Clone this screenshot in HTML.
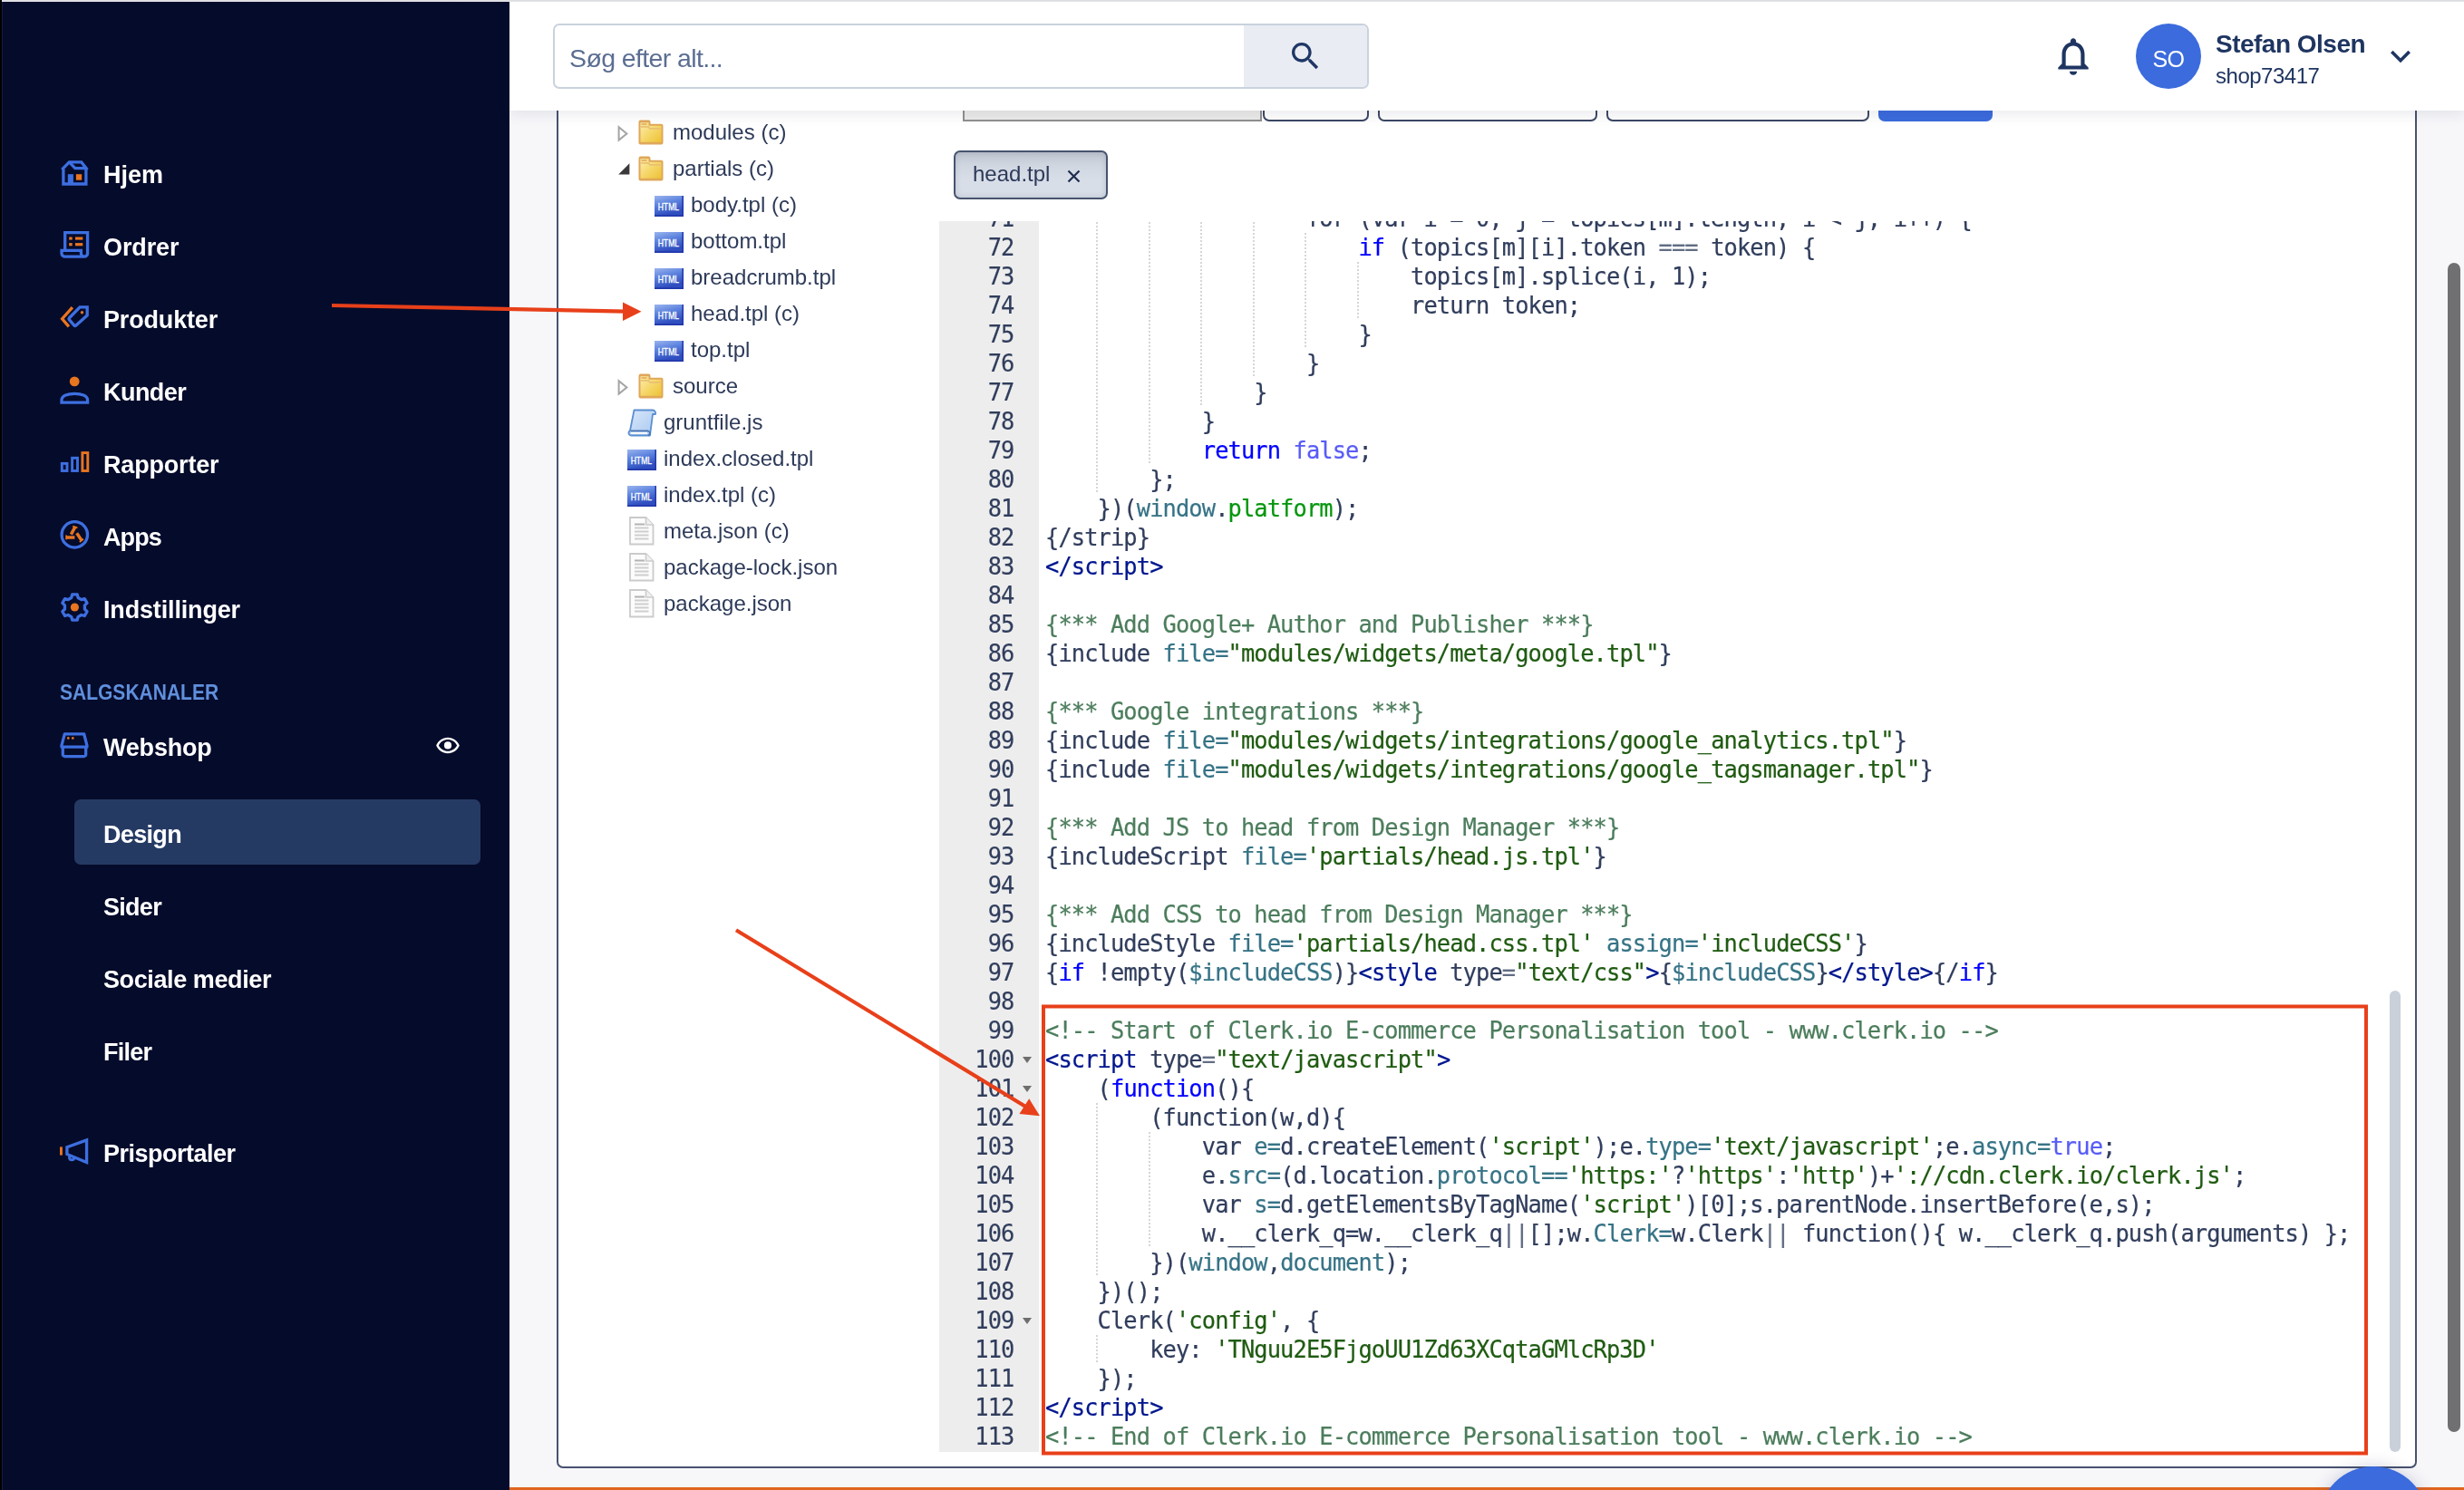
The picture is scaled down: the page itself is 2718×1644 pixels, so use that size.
<!DOCTYPE html>
<html lang="da">
<head>
<meta charset="utf-8">
<title>Design - head.tpl</title>
<style>
*{box-sizing:border-box;margin:0;padding:0}
html,body{width:2718px;height:1644px;overflow:hidden;background:#f7f7fa}
body{position:relative;font-family:"Liberation Sans",sans-serif;color:#2d3a59}
.abs{position:absolute}
/* ---------- sidebar ---------- */
#side{position:absolute;left:0;top:0;width:562px;height:1644px;background:#050b2b;z-index:30}
#side:before{content:"";position:absolute;left:0;top:0;width:3px;height:100%;background:linear-gradient(to right,#000 0,#000 1.7px,#161d3c 1.7px,#161d3c 3px)}
.nav{position:absolute;left:114px;color:#fff;font-weight:700;font-size:27px;line-height:32px;white-space:nowrap}
.ico{position:absolute;left:66px;width:32px;height:32px;overflow:visible}
#sect{position:absolute;left:66px;top:748.6px;color:#5f8fdc;font-weight:700;font-size:23.7px;line-height:30px;transform:scaleX(.887);transform-origin:0 50%;white-space:nowrap}
#sel{position:absolute;left:82px;top:882px;width:448px;height:72px;border-radius:7px;background:#253a63}
/* ---------- header ---------- */
#topline{position:absolute;left:2px;top:0;width:2716px;height:2px;background:linear-gradient(#d9dade,#e6e7ea);z-index:60}
#hdr{position:absolute;left:562px;top:0;width:2156px;height:122px;background:#fff;z-index:40;box-shadow:0 4px 14px rgba(40,50,80,.10)}
#search{position:absolute;left:48px;top:26px;width:900px;height:72px;border:2px solid #c9d2dd;border-radius:7px;background:#fff;overflow:hidden}
#search .ph{position:absolute;left:16px;top:18px;font-size:28.5px;line-height:36px;color:#5b6e92;white-space:nowrap;letter-spacing:-.62px}
#search .btn{position:absolute;right:0;top:0;width:136px;height:68px;background:#e9ecf2}
#uname{position:absolute;left:1882px;top:30.5px;font-weight:700;font-size:28px;line-height:36px;color:#1f3561;white-space:nowrap;letter-spacing:-.51px}
#ushop{position:absolute;left:1882px;top:67px;font-size:24px;line-height:34px;color:#1f3561;white-space:nowrap;letter-spacing:-.48px}
#avatar{position:absolute;left:1794px;top:26px;width:72px;height:72px;border-radius:50%;background:#3b6bdd;color:#fff;font-size:25px;line-height:72px;text-align:center;padding-top:3px;letter-spacing:-.5px}
/* ---------- panel ---------- */
#panel{position:absolute;left:614px;top:60px;width:2052px;height:1560px;background:#fff;border:2px solid #465270;border-radius:0 0 7px 7px;z-index:10}
.tb{position:absolute;top:100px;height:34px;z-index:12}
/* tree */
.tr{position:absolute;font-size:24px;line-height:32px;white-space:nowrap;color:#2d3a59;z-index:15;will-change:transform}
.ti{position:absolute;z-index:15}
/* tab */
#tab{position:absolute;left:1052px;top:166px;width:170px;height:54px;border:2px solid #47546f;border-radius:7px;background:linear-gradient(#bfc5d0 0,#d0d6e0 28%,#d8dee8 60%);z-index:15;box-shadow:inset 0 0 6px rgba(60,72,100,.2)}
#tab span{position:absolute;left:19px;top:8px;font-size:24px;line-height:32px;color:#2d3a59}
/* editor */
#ed{position:absolute;left:1036px;top:244px;width:1628px;height:1358px;overflow:hidden;z-index:14;background:#fff}
#gut{position:absolute;left:0;top:0;width:110px;height:1358px;background:#ededed}
.ln,.cl{position:absolute;height:32px;line-height:32px;font-family:"DejaVu Sans Mono","Liberation Mono",monospace;font-size:25.4px;letter-spacing:-.892px;white-space:pre;transform:scaleY(1.08);transform-origin:0 24.8px}
.ln{left:0;width:82.5px;text-align:right;color:#303d5c;-webkit-text-stroke:.18px currentColor}
.cl{left:117px;color:#303d5c;-webkit-text-stroke:.22px currentColor}
.fw{position:absolute;left:92px;width:0;height:0;border-left:5.5px solid transparent;border-right:5.5px solid transparent;border-top:7px solid #6e6e6e}
.ig{position:absolute;width:2px;height:32px;background:repeating-linear-gradient(to bottom,#d6d6d6 0,#d6d6d6 2px,transparent 2px,transparent 4px)}
.k{color:#0000ff}.s{color:#1f5b11}.c{color:#4c7d5c}.v{color:#367386}.o{color:#616d83}.g{color:#00168e}.n{color:#585cf6}.p{color:#06960e}
#side,#hdr,#ed,#tab{will-change:transform}
</style>
</head>
<body>
<div id="side">
<svg class="ico" style="top:174px" viewBox="0 0 32 32" fill="none" stroke-width="3.3" ><path d="M3.9 12.5V29H28.9V12.5" stroke="#3d6fe0"/><path d="M2.3 13.2L10.4 4.9H23.8L30.4 13.2" stroke="#3d6fe0"/><path d="M10.6 5.2L16.9 11.7H30" stroke="#3d6fe0"/><rect x="8.8" y="18.2" width="6.1" height="10" fill="#3d6fe0"/><rect x="17.9" y="18.2" width="6.3" height="6.5" fill="#e8751f"/></svg>
<div class="nav" id="n_hjem" style="top:177px;letter-spacing:0px">Hjem</div>
<svg class="ico" style="top:254px" viewBox="0 0 32 32" fill="none" stroke-width="3.3" ><path d="M5.7 22V2.7H30.6V25.4a3.7 3.7 0 0 1-3.7 3.7H5.7a3.7 3.7 0 0 1-3.7-3.7V22.3H23.4V25.6a3.4 3.4 0 0 0 3.4 3.4" stroke="#3d6fe0"/><rect x="10.2" y="7.5" width="3.5" height="3.1" fill="#e8751f"/><rect x="17" y="7.5" width="8.3" height="3.1" fill="#e8751f"/><rect x="10.2" y="14.1" width="3.5" height="3.2" fill="#e8751f"/><rect x="17" y="14.1" width="8.3" height="3.2" fill="#e8751f"/></svg>
<div class="nav" id="n_ordrer" style="top:257px;letter-spacing:-0.12px">Ordrer</div>
<svg class="ico" style="top:334px" viewBox="0 0 32 32" fill="none" stroke-width="3.3" ><path d="M13.9 5.2L2.6 17.7L9.9 26.4" stroke="#e8751f"/><path d="M22.1 4.9H30.2V13.9L17.6 25.3a1.2 1.2 0 0 1-1.7-.1L10.3 18.6a1.2 1.2 0 0 1 0-1.6Z" stroke="#3d6fe0" stroke-linejoin="miter"/><circle cx="24.5" cy="10.8" r="1.7" fill="#e8751f"/></svg>
<div class="nav" id="n_produkter" style="top:337px;letter-spacing:-0.17px">Produkter</div>
<svg class="ico" style="top:414px" viewBox="0 0 32 32" fill="none" stroke-width="3.3" ><circle cx="16.2" cy="6.9" r="5.4" fill="#e8751f"/><path d="M2 30.1V27.4C2 22.6 9 20.3 16.3 20.3S30.6 22.6 30.6 27.4V30.1Z" stroke="#3d6fe0"/></svg>
<div class="nav" id="n_kunder" style="top:417px;letter-spacing:-0.54px">Kunder</div>
<svg class="ico" style="top:494px" viewBox="0 0 32 32" fill="none" stroke-width="3.3" ><rect x="2.3" y="17.4" width="5.7" height="8.1" stroke="#3d6fe0" stroke-width="2.9"/><rect x="13.6" y="11.3" width="5.9" height="14.2" stroke="#3d6fe0" stroke-width="2.9"/><rect x="24.9" y="5.6" width="5.9" height="19.9" stroke="#e8751f" stroke-width="2.9"/></svg>
<div class="nav" id="n_rapporter" style="top:497px;letter-spacing:-0.18px">Rapporter</div>
<svg class="ico" style="top:574px" viewBox="0 0 32 32" fill="none" stroke-width="3.3" ><circle cx="16.3" cy="15.9" r="14.2" stroke="#3d6fe0"/><path d="M16.9 7.4L12.4 15.6M7.4 18.9H16.4M18.7 14.3L24.2 22.4" stroke="#e8751f" stroke-width="3.5"/><path d="M14.2 6.6L19.4 8.4M7.2 16.6V21.2M21.8 24L26 20.8" stroke="#e8751f" stroke-width="1.8"/></svg>
<div class="nav" id="n_apps" style="top:577px;letter-spacing:-0.88px">Apps</div>
<svg class="ico" style="top:654px" viewBox="0 0 32 32" fill="none" stroke-width="3.3" ><path d="M20.10 5.46 L19.20 1.91 L13.70 1.91 L12.80 5.46 L9.10 7.60 L5.58 6.60 L2.83 11.36 L5.46 13.91 L5.46 18.19 L2.83 20.74 L5.58 25.50 L9.10 24.50 L12.80 26.64 L13.70 30.19 L19.20 30.19 L20.10 26.64 L23.80 24.50 L27.32 25.50 L30.07 20.74 L27.44 18.19 L27.44 13.91 L30.07 11.36 L27.32 6.60 L23.80 7.60 Z" stroke="#3d6fe0" stroke-linejoin="round"/><circle cx="16.4" cy="16" r="4.6" fill="#e8751f"/></svg>
<div class="nav" id="n_indst" style="top:657px;letter-spacing:-0.16px">Indstillinger</div>
<div id="sect">SALGSKANALER</div>
<svg class="ico" style="top:806px" viewBox="0 0 32 32" fill="none" stroke-width="3.3" ><path d="M5.3 3.9H26.7L29.9 16.4V18.2H2V16.4Z" stroke="#3d6fe0" stroke-linejoin="round"/><path d="M3.3 18V26.4a2.2 2.2 0 0 0 2.2 2.2H26.5a2.2 2.2 0 0 0 2.2-2.2V18" stroke="#3d6fe0"/><circle cx="9.3" cy="8.4" r="1.35" fill="#e8751f"/><circle cx="14.3" cy="8.4" r="1.35" fill="#e8751f"/></svg>
<div class="nav" id="n_webshop" style="top:809px;letter-spacing:-.2px">Webshop</div>
<svg class="abs" style="left:480px;top:808.6px;width:28px;height:28px" viewBox="0 0 24 24"><path fill="#fff" fill-rule="evenodd" d="M12 4C7 4 2.730 7.110 1 11.500 2.730 15.890 7 19 12 19s9.270-3.110 11-7.500C21.270 7.110 17 4 12 4zM12 6.100c3.700 0 7 2.080 8.620 5.400C19 14.820 15.700 16.900 12 16.900s-7-2.080-8.620-5.400C5 8.180 8.300 6.100 12 6.100z"/><circle cx="12" cy="11.5" r="3.5" fill="#fff"/></svg>
<div id="sel"></div>
<div class="nav" id="n_design" style="top:905px;letter-spacing:-0.67px">Design</div>
<div class="nav" id="n_sider" style="top:985px;letter-spacing:-0.71px">Sider</div>
<div class="nav" id="n_sociale" style="top:1065px;letter-spacing:-0.4px">Sociale medier</div>
<div class="nav" id="n_filer" style="top:1145px;letter-spacing:-0.76px">Filer</div>
<svg class="ico" style="top:1254px" viewBox="0 0 32 32" fill="none" stroke-width="3.3" ><rect x="0" y="11.4" width="2.9" height="9.2" fill="#e8751f"/><path d="M7.9 11.7L29.6 3.9V28.6L7.9 19.4Z" stroke="#3d6fe0" stroke-linejoin="miter"/><path d="M10.6 21.6V23.2a2.6 2.6 0 0 0 5.2 0" stroke="#3d6fe0" stroke-width="3"/></svg>
<div class="nav" id="n_pris" style="top:1257px;letter-spacing:-.5px">Prisportaler</div>
</div>
<div id="topline"></div>
<div id="hdr">
  <div id="search">
    <div class="ph">Søg efter alt...</div>
    <div class="btn">
      <svg class="abs" style="left:47.8px;top:14px;width:40px;height:40px" viewBox="0 0 24 24"><path fill="#1f3766" d="M15.5 14h-.79l-.28-.27C15.41 12.59 16 11.11 16 9.5 16 5.91 13.09 3 9.5 3S3 5.91 3 9.5 5.91 16 9.5 16c1.61 0 3.09-.59 4.23-1.57l.27.28v.79l5 4.99L20.49 19l-4.99-5zm-6 0C7.01 14 5 11.99 5 9.5S7.01 5 9.5 5 14 7.01 14 9.5 11.99 14 9.5 14z"/></svg>
    </div>
  </div>
  <svg class="abs" style="left:1700px;top:37px;width:50px;height:50px" viewBox="0 0 24 24"><path fill="#1f3561" d="M12 22c1.1 0 2-.9 2-2h-4c0 1.1.9 2 2 2zm6-6v-5c0-3.07-1.63-5.64-4.500-6.320V4c0-.83-.67-1.500-1.500-1.500s-1.500.67-1.500 1.500v.68C7.640 5.360 6 7.920 6 11v5l-2 2v1h16v-1l-2-2zm-2 1H8v-6c0-2.480 1.510-4.500 4-4.500s4 2.020 4 4.500v6z"/></svg>
  <div id="avatar">SO</div>
  <div id="uname">Stefan Olsen</div>
  <div id="ushop">shop73417</div>
  <svg class="abs" style="left:2064px;top:40px;width:44px;height:44px" viewBox="0 0 24 24"><path fill="#1f3561" d="M16.59 8.59L12 13.170 7.410 8.590 6 10l6 6 6-6z"/></svg>
</div>
<div id="panel"></div>
<svg class="abs" style="left:0;top:0;width:0;height:0" aria-hidden="true"><defs><linearGradient id="fg" x1="0" y1="0" x2="1" y2="1"><stop offset="0" stop-color="#fcedb0"/><stop offset=".55" stop-color="#f5d564"/><stop offset="1" stop-color="#ecc235"/></linearGradient><linearGradient id="hg" x1="0" y1="0" x2="0.35" y2="1"><stop offset="0" stop-color="#9bb5ee"/><stop offset=".5" stop-color="#587fdd"/><stop offset="1" stop-color="#2f4ebf"/></linearGradient><linearGradient id="sg" x1="0" y1="0" x2="1" y2="1"><stop offset="0" stop-color="#d9e8fb"/><stop offset="1" stop-color="#a9c8f0"/></linearGradient></defs></svg>
<div class="tb" style="left:1062px;width:330px;background:#ecebea;border:2px solid #909090;border-top:0"></div>
<div class="tb" style="left:1393px;width:117px;background:#fff;border:2px solid #3c4864;border-radius:0 0 7px 7px"></div>
<div class="tb" style="left:1520px;width:242px;background:#fff;border:2px solid #3c4864;border-radius:0 0 7px 7px"></div>
<div class="tb" style="left:1772px;width:290px;background:#fff;border:2px solid #3c4864;border-radius:0 0 7px 7px"></div>
<div class="tb" style="left:2072px;width:126px;background:#3b6bdd;border-radius:0 0 7px 7px"></div>
<svg class="ti" style="left:703px;top:129.5px;width:30px;height:31px" viewBox="0 0 30 30" preserveAspectRatio="none"><path d="M1.5 4.5a2 2 0 0 1 2-2h9a2 2 0 0 1 2 2v2h12a2 2 0 0 1 2 2v18a2 2 0 0 1-2 2h-23a2 2 0 0 1-2-2z" fill="#e0a75a"/><path d="M3.5 5h9v3.5h14v17.5h-23z" fill="url(#fg)"/><path d="M4 9.5h8l2 2h12.5" stroke="#e9c071" stroke-width="1.6" fill="none"/><path d="M4.5 6.8h6" stroke="#e6b45e" stroke-width="1.8" fill="none"/></svg>
<svg class="ti" style="left:681px;top:138px;width:14px;height:20px" viewBox="0 0 14 20" fill="none"><path d="M1.6 2.2L10.4 9.4L1.6 16.6Z" stroke="#a4a4a4" stroke-width="2" stroke-linejoin="miter"/></svg>
<div class="tr" style="left:742px;top:129.8px">modules (c)</div>
<svg class="ti" style="left:703px;top:169.5px;width:30px;height:31px" viewBox="0 0 30 30" preserveAspectRatio="none"><path d="M1.5 4.5a2 2 0 0 1 2-2h9a2 2 0 0 1 2 2v2h12a2 2 0 0 1 2 2v18a2 2 0 0 1-2 2h-23a2 2 0 0 1-2-2z" fill="#e0a75a"/><path d="M3.5 5h9v3.5h14v17.5h-23z" fill="url(#fg)"/><path d="M4 9.5h8l2 2h12.5" stroke="#e9c071" stroke-width="1.6" fill="none"/><path d="M4.5 6.8h6" stroke="#e6b45e" stroke-width="1.8" fill="none"/></svg>
<svg class="ti" style="left:682px;top:180px;width:14px;height:14px" viewBox="0 0 14 14"><path d="M12.4 0.2V12.4H0.2Z" fill="#3a3a3a"/></svg>
<div class="tr" style="left:742px;top:169.8px">partials (c)</div>
<svg class="ti" style="left:722px;top:216px;width:32px;height:23px" viewBox="0 0 32 23"><rect width="32" height="23" fill="#2136ab"/><rect x="0" y="0" width="30.5" height="21.3" fill="url(#hg)"/><text x="15.4" y="15.8" text-anchor="middle" font-family="Liberation Sans, sans-serif" font-weight="400" font-size="11.2" textLength="23.5" lengthAdjust="spacingAndGlyphs" fill="#fff" stroke="#fff" stroke-width=".35">HTML</text></svg>
<div class="tr" style="left:762px;top:209.8px">body.tpl (c)</div>
<svg class="ti" style="left:722px;top:256px;width:32px;height:23px" viewBox="0 0 32 23"><rect width="32" height="23" fill="#2136ab"/><rect x="0" y="0" width="30.5" height="21.3" fill="url(#hg)"/><text x="15.4" y="15.8" text-anchor="middle" font-family="Liberation Sans, sans-serif" font-weight="400" font-size="11.2" textLength="23.5" lengthAdjust="spacingAndGlyphs" fill="#fff" stroke="#fff" stroke-width=".35">HTML</text></svg>
<div class="tr" style="left:762px;top:249.8px">bottom.tpl</div>
<svg class="ti" style="left:722px;top:296px;width:32px;height:23px" viewBox="0 0 32 23"><rect width="32" height="23" fill="#2136ab"/><rect x="0" y="0" width="30.5" height="21.3" fill="url(#hg)"/><text x="15.4" y="15.8" text-anchor="middle" font-family="Liberation Sans, sans-serif" font-weight="400" font-size="11.2" textLength="23.5" lengthAdjust="spacingAndGlyphs" fill="#fff" stroke="#fff" stroke-width=".35">HTML</text></svg>
<div class="tr" style="left:762px;top:289.8px">breadcrumb.tpl</div>
<svg class="ti" style="left:722px;top:336px;width:32px;height:23px" viewBox="0 0 32 23"><rect width="32" height="23" fill="#2136ab"/><rect x="0" y="0" width="30.5" height="21.3" fill="url(#hg)"/><text x="15.4" y="15.8" text-anchor="middle" font-family="Liberation Sans, sans-serif" font-weight="400" font-size="11.2" textLength="23.5" lengthAdjust="spacingAndGlyphs" fill="#fff" stroke="#fff" stroke-width=".35">HTML</text></svg>
<div class="tr" style="left:762px;top:329.8px">head.tpl (c)</div>
<svg class="ti" style="left:722px;top:376px;width:32px;height:23px" viewBox="0 0 32 23"><rect width="32" height="23" fill="#2136ab"/><rect x="0" y="0" width="30.5" height="21.3" fill="url(#hg)"/><text x="15.4" y="15.8" text-anchor="middle" font-family="Liberation Sans, sans-serif" font-weight="400" font-size="11.2" textLength="23.5" lengthAdjust="spacingAndGlyphs" fill="#fff" stroke="#fff" stroke-width=".35">HTML</text></svg>
<div class="tr" style="left:762px;top:369.8px">top.tpl</div>
<svg class="ti" style="left:703px;top:409.5px;width:30px;height:31px" viewBox="0 0 30 30" preserveAspectRatio="none"><path d="M1.5 4.5a2 2 0 0 1 2-2h9a2 2 0 0 1 2 2v2h12a2 2 0 0 1 2 2v18a2 2 0 0 1-2 2h-23a2 2 0 0 1-2-2z" fill="#e0a75a"/><path d="M3.5 5h9v3.5h14v17.5h-23z" fill="url(#fg)"/><path d="M4 9.5h8l2 2h12.5" stroke="#e9c071" stroke-width="1.6" fill="none"/><path d="M4.5 6.8h6" stroke="#e6b45e" stroke-width="1.8" fill="none"/></svg>
<svg class="ti" style="left:681px;top:418px;width:14px;height:20px" viewBox="0 0 14 20" fill="none"><path d="M1.6 2.2L10.4 9.4L1.6 16.6Z" stroke="#a4a4a4" stroke-width="2" stroke-linejoin="miter"/></svg>
<div class="tr" style="left:742px;top:409.8px">source</div>
<svg class="ti" style="left:692px;top:450px;width:33px;height:33px" viewBox="0 0 33 33" fill="none"><path d="M7.5 2.5H28a3.5 3.5 0 0 1 3 4.5h-3L25 30.5H4.5a3 3 0 0 1-2.8-4.2l1.3-1.3z" fill="url(#sg)" stroke="#5b8fd0" stroke-width="1.8" stroke-linejoin="round"/><path d="M3.5 25.5h19.5a2.6 2.6 0 0 1 0 5" stroke="#4a76b4" stroke-width="1.8"/><path d="M4 27.8h18" stroke="#fff" stroke-width="2"/></svg>
<div class="tr" style="left:732px;top:449.8px">gruntfile.js</div>
<svg class="ti" style="left:692px;top:496px;width:32px;height:23px" viewBox="0 0 32 23"><rect width="32" height="23" fill="#2136ab"/><rect x="0" y="0" width="30.5" height="21.3" fill="url(#hg)"/><text x="15.4" y="15.8" text-anchor="middle" font-family="Liberation Sans, sans-serif" font-weight="400" font-size="11.2" textLength="23.5" lengthAdjust="spacingAndGlyphs" fill="#fff" stroke="#fff" stroke-width=".35">HTML</text></svg>
<div class="tr" style="left:732px;top:489.8px">index.closed.tpl</div>
<svg class="ti" style="left:692px;top:536px;width:32px;height:23px" viewBox="0 0 32 23"><rect width="32" height="23" fill="#2136ab"/><rect x="0" y="0" width="30.5" height="21.3" fill="url(#hg)"/><text x="15.4" y="15.8" text-anchor="middle" font-family="Liberation Sans, sans-serif" font-weight="400" font-size="11.2" textLength="23.5" lengthAdjust="spacingAndGlyphs" fill="#fff" stroke="#fff" stroke-width=".35">HTML</text></svg>
<div class="tr" style="left:732px;top:529.8px">index.tpl (c)</div>
<svg class="ti" style="left:693px;top:569.2px;width:30px;height:33px" viewBox="0 0 30 33" fill="none"><path d="M2 2h17.5l8 8v21.5H2z" fill="#fcfcfc" stroke="#cbcbcb" stroke-width="1.8"/><path d="M19.5 2v8h8" stroke="#cbcbcb" stroke-width="1.6" fill="#f0f0f0"/><path d="M7 9.5h11" stroke="#b2b2b2" stroke-width="2"/><path d="M7 13.5h15.5M7 17.5h15.5M7 21.5h15.5M7 25.5h15.5" stroke="#cecece" stroke-width="2"/></svg>
<div class="tr" style="left:732px;top:569.8px">meta.json (c)</div>
<svg class="ti" style="left:693px;top:609.2px;width:30px;height:33px" viewBox="0 0 30 33" fill="none"><path d="M2 2h17.5l8 8v21.5H2z" fill="#fcfcfc" stroke="#cbcbcb" stroke-width="1.8"/><path d="M19.5 2v8h8" stroke="#cbcbcb" stroke-width="1.6" fill="#f0f0f0"/><path d="M7 9.5h11" stroke="#b2b2b2" stroke-width="2"/><path d="M7 13.5h15.5M7 17.5h15.5M7 21.5h15.5M7 25.5h15.5" stroke="#cecece" stroke-width="2"/></svg>
<div class="tr" style="left:732px;top:609.8px">package-lock.json</div>
<svg class="ti" style="left:693px;top:649.2px;width:30px;height:33px" viewBox="0 0 30 33" fill="none"><path d="M2 2h17.5l8 8v21.5H2z" fill="#fcfcfc" stroke="#cbcbcb" stroke-width="1.8"/><path d="M19.5 2v8h8" stroke="#cbcbcb" stroke-width="1.6" fill="#f0f0f0"/><path d="M7 9.5h11" stroke="#b2b2b2" stroke-width="2"/><path d="M7 13.5h15.5M7 17.5h15.5M7 21.5h15.5M7 25.5h15.5" stroke="#cecece" stroke-width="2"/></svg>
<div class="tr" style="left:732px;top:649.8px">package.json</div>
<div id="tab"><span>head.tpl</span><svg class="abs" style="left:123px;top:18.5px;width:15px;height:15px" viewBox="0 0 16 16"><path d="M1.6 1.6L14.4 14.4M14.4 1.6L1.6 14.4" stroke="#1f2d4d" stroke-width="2.4"/></svg></div>
<div id="ed">
<div id="gut">
<div class="ln" style="top:-19.5px">71</div>
<div class="ln" style="top:12.5px">72</div>
<div class="ln" style="top:44.5px">73</div>
<div class="ln" style="top:76.5px">74</div>
<div class="ln" style="top:108.5px">75</div>
<div class="ln" style="top:140.5px">76</div>
<div class="ln" style="top:172.5px">77</div>
<div class="ln" style="top:204.5px">78</div>
<div class="ln" style="top:236.5px">79</div>
<div class="ln" style="top:268.5px">80</div>
<div class="ln" style="top:300.5px">81</div>
<div class="ln" style="top:332.5px">82</div>
<div class="ln" style="top:364.5px">83</div>
<div class="ln" style="top:396.5px">84</div>
<div class="ln" style="top:428.5px">85</div>
<div class="ln" style="top:460.5px">86</div>
<div class="ln" style="top:492.5px">87</div>
<div class="ln" style="top:524.5px">88</div>
<div class="ln" style="top:556.5px">89</div>
<div class="ln" style="top:588.5px">90</div>
<div class="ln" style="top:620.5px">91</div>
<div class="ln" style="top:652.5px">92</div>
<div class="ln" style="top:684.5px">93</div>
<div class="ln" style="top:716.5px">94</div>
<div class="ln" style="top:748.5px">95</div>
<div class="ln" style="top:780.5px">96</div>
<div class="ln" style="top:812.5px">97</div>
<div class="ln" style="top:844.5px">98</div>
<div class="ln" style="top:876.5px">99</div>
<div class="ln" style="top:908.5px">100</div><div class="fw" style="top:921.5px"></div>
<div class="ln" style="top:940.5px">101</div><div class="fw" style="top:953.5px"></div>
<div class="ln" style="top:972.5px">102</div>
<div class="ln" style="top:1004.5px">103</div>
<div class="ln" style="top:1036.5px">104</div>
<div class="ln" style="top:1068.5px">105</div>
<div class="ln" style="top:1100.5px">106</div>
<div class="ln" style="top:1132.5px">107</div>
<div class="ln" style="top:1164.5px">108</div>
<div class="ln" style="top:1196.5px">109</div><div class="fw" style="top:1209.5px"></div>
<div class="ln" style="top:1228.5px">110</div>
<div class="ln" style="top:1260.5px">111</div>
<div class="ln" style="top:1292.5px">112</div>
<div class="ln" style="top:1324.5px">113</div>
</div>
<div class="ig" style="left:173.0px;top:-19.5px"></div><div class="ig" style="left:230.6px;top:-19.5px"></div><div class="ig" style="left:288.2px;top:-19.5px"></div><div class="ig" style="left:345.8px;top:-19.5px"></div><div class="cl" style="top:-19.5px">                    for (var i = 0, j = topics[m].length; i &lt; j; i++) {</div>
<div class="ig" style="left:173.0px;top:12.5px"></div><div class="ig" style="left:230.6px;top:12.5px"></div><div class="ig" style="left:288.2px;top:12.5px"></div><div class="ig" style="left:345.8px;top:12.5px"></div><div class="ig" style="left:403.4px;top:12.5px"></div><div class="cl" style="top:12.5px">                        <span class="k">if</span> (topics[m][i].token <span class="o">===</span> token) {</div>
<div class="ig" style="left:173.0px;top:44.5px"></div><div class="ig" style="left:230.6px;top:44.5px"></div><div class="ig" style="left:288.2px;top:44.5px"></div><div class="ig" style="left:345.8px;top:44.5px"></div><div class="ig" style="left:403.4px;top:44.5px"></div><div class="ig" style="left:461.0px;top:44.5px"></div><div class="cl" style="top:44.5px">                            topics[m].splice(i, 1);</div>
<div class="ig" style="left:173.0px;top:76.5px"></div><div class="ig" style="left:230.6px;top:76.5px"></div><div class="ig" style="left:288.2px;top:76.5px"></div><div class="ig" style="left:345.8px;top:76.5px"></div><div class="ig" style="left:403.4px;top:76.5px"></div><div class="ig" style="left:461.0px;top:76.5px"></div><div class="cl" style="top:76.5px">                            return token;</div>
<div class="ig" style="left:173.0px;top:108.5px"></div><div class="ig" style="left:230.6px;top:108.5px"></div><div class="ig" style="left:288.2px;top:108.5px"></div><div class="ig" style="left:345.8px;top:108.5px"></div><div class="ig" style="left:403.4px;top:108.5px"></div><div class="cl" style="top:108.5px">                        }</div>
<div class="ig" style="left:173.0px;top:140.5px"></div><div class="ig" style="left:230.6px;top:140.5px"></div><div class="ig" style="left:288.2px;top:140.5px"></div><div class="ig" style="left:345.8px;top:140.5px"></div><div class="cl" style="top:140.5px">                    }</div>
<div class="ig" style="left:173.0px;top:172.5px"></div><div class="ig" style="left:230.6px;top:172.5px"></div><div class="ig" style="left:288.2px;top:172.5px"></div><div class="cl" style="top:172.5px">                }</div>
<div class="ig" style="left:173.0px;top:204.5px"></div><div class="ig" style="left:230.6px;top:204.5px"></div><div class="cl" style="top:204.5px">            }</div>
<div class="ig" style="left:173.0px;top:236.5px"></div><div class="ig" style="left:230.6px;top:236.5px"></div><div class="cl" style="top:236.5px">            <span class="k">return</span> <span class="n">false</span>;</div>
<div class="ig" style="left:173.0px;top:268.5px"></div><div class="cl" style="top:268.5px">        };</div>
<div class="cl" style="top:300.5px">    })(<span class="v">window</span>.<span class="p">platform</span>);</div>
<div class="cl" style="top:332.5px">{/strip}</div>
<div class="cl" style="top:364.5px"><span class="g">&lt;/script&gt;</span></div>

<div class="cl" style="top:428.5px"><span class="c">{*** Add Google+ Author and Publisher ***}</span></div>
<div class="cl" style="top:460.5px">{include <span class="v">file</span><span class="v">=</span><span class="s">"modules/widgets/meta/google.tpl"</span>}</div>

<div class="cl" style="top:524.5px"><span class="c">{*** Google integrations ***}</span></div>
<div class="cl" style="top:556.5px">{include <span class="v">file</span><span class="v">=</span><span class="s">"modules/widgets/integrations/google_analytics.tpl"</span>}</div>
<div class="cl" style="top:588.5px">{include <span class="v">file</span><span class="v">=</span><span class="s">"modules/widgets/integrations/google_tagsmanager.tpl"</span>}</div>

<div class="cl" style="top:652.5px"><span class="c">{*** Add JS to head from Design Manager ***}</span></div>
<div class="cl" style="top:684.5px">{includeScript <span class="v">file</span><span class="v">=</span><span class="s">'partials/head.js.tpl'</span>}</div>

<div class="cl" style="top:748.5px"><span class="c">{*** Add CSS to head from Design Manager ***}</span></div>
<div class="cl" style="top:780.5px">{includeStyle <span class="v">file</span><span class="v">=</span><span class="s">'partials/head.css.tpl'</span> <span class="v">assign</span><span class="v">=</span><span class="s">'includeCSS'</span>}</div>
<div class="cl" style="top:812.5px">{<span class="k">if</span> !empty(<span class="v">$includeCSS</span>)}<span class="g">&lt;style</span> type<span class="o">=</span><span class="s">"text/css"</span><span class="g">&gt;</span>{<span class="v">$includeCSS</span>}<span class="g">&lt;/style&gt;</span>{/<span class="k">if</span>}</div>

<div class="cl" style="top:876.5px"><span class="c">&lt;!-- Start of Clerk.io E-commerce Personalisation tool - www.clerk.io --&gt;</span></div>
<div class="cl" style="top:908.5px"><span class="g">&lt;script</span> type<span class="o">=</span><span class="s">"text/javascript"</span><span class="g">&gt;</span></div>
<div class="cl" style="top:940.5px">    (<span class="k">function</span>(){</div>
<div class="ig" style="left:173.0px;top:972.5px"></div><div class="cl" style="top:972.5px">        (function(w,d){</div>
<div class="ig" style="left:173.0px;top:1004.5px"></div><div class="ig" style="left:230.6px;top:1004.5px"></div><div class="cl" style="top:1004.5px">            var <span class="v">e</span><span class="v">=</span>d.createElement(<span class="s">'script'</span>);e.<span class="v">type</span><span class="v">=</span><span class="s">'text/javascript'</span>;e.<span class="v">async</span><span class="v">=</span><span class="n">true</span>;</div>
<div class="ig" style="left:173.0px;top:1036.5px"></div><div class="ig" style="left:230.6px;top:1036.5px"></div><div class="cl" style="top:1036.5px">            e.<span class="v">src</span><span class="v">=</span>(d.location.<span class="v">protocol</span><span class="v">==</span><span class="s">'https:'</span>?<span class="s">'https'</span>:<span class="s">'http'</span>)+<span class="s">'://cdn.clerk.io/clerk.js'</span>;</div>
<div class="ig" style="left:173.0px;top:1068.5px"></div><div class="ig" style="left:230.6px;top:1068.5px"></div><div class="cl" style="top:1068.5px">            var <span class="v">s</span><span class="v">=</span>d.getElementsByTagName(<span class="s">'script'</span>)[0];s.parentNode.insertBefore(e,s);</div>
<div class="ig" style="left:173.0px;top:1100.5px"></div><div class="ig" style="left:230.6px;top:1100.5px"></div><div class="cl" style="top:1100.5px">            w.__clerk_q=w.__clerk_q<span class="o">||</span>[];w.<span class="v">Clerk</span><span class="v">=</span>w.Clerk<span class="o">||</span> function(){ w.__clerk_q.push(arguments) };</div>
<div class="ig" style="left:173.0px;top:1132.5px"></div><div class="cl" style="top:1132.5px">        })(<span class="v">window</span>,<span class="v">document</span>);</div>
<div class="cl" style="top:1164.5px">    })();</div>
<div class="cl" style="top:1196.5px">    Clerk(<span class="s">'config'</span>, {</div>
<div class="ig" style="left:173.0px;top:1228.5px"></div><div class="cl" style="top:1228.5px">        key: <span class="s">'TNguu2E5FjgoUU1Zd63XCqtaGMlcRp3D'</span></div>
<div class="cl" style="top:1260.5px">    });</div>
<div class="cl" style="top:1292.5px"><span class="g">&lt;/script&gt;</span></div>
<div class="cl" style="top:1324.5px"><span class="c">&lt;!-- End of Clerk.io E-commerce Personalisation tool - www.clerk.io --&gt;</span></div>
</div>
<!-- ace scrollbar -->
<div class="abs" style="left:2636px;top:1093px;width:12px;height:509px;border-radius:6px;background:#c9d0d9;z-index:16"></div>
<!-- page scrollbar -->
<div class="abs" style="left:2700px;top:290px;width:14px;height:1290px;border-radius:7px;background:#707072;z-index:16"></div>
<!-- bottom orange strip -->
<div class="abs" style="left:562px;top:1641px;width:2156px;height:3px;background:#e0661f;z-index:17"></div>
<!-- chat bubble -->
<div class="abs" style="left:2558px;top:1618px;width:120px;height:120px;border-radius:50%;background:#3b6bdd;z-index:18;box-shadow:0 0 18px rgba(40,50,90,.22)"></div>
<!-- annotation layer -->
<svg class="abs" style="left:0;top:0;width:2718px;height:1644px;z-index:50;pointer-events:none" viewBox="0 0 2718 1644" fill="none">
  <rect x="1151" y="1110.5" width="1459" height="493" stroke="#e8401a" stroke-width="4"/>
  <path d="M366 337L690 343.6" stroke="#e8401a" stroke-width="4.2"/>
  <path d="M707.5 343.8L687 333.6V354Z" fill="#e8401a"/>
  <path d="M812 1026.3L1133 1222" stroke="#e8401a" stroke-width="4.2"/>
  <path d="M1147 1231.3L1135.2 1212.2L1124.4 1229Z" fill="#e8401a"/>
</svg>
</body>
</html>
